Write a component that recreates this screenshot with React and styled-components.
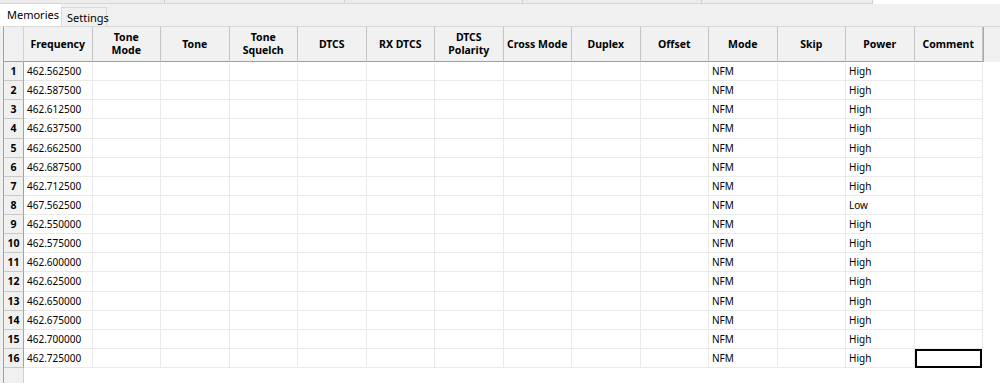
import React from "react";
import styled, { createGlobalStyle } from "styled-components";

const GlobalStyle = createGlobalStyle`
  html, body {
    margin: 0;
    padding: 0;
    height: 100%;
    background: #f0f0f0;
  }
  #root {
    height: 100%;
  }
  * {
    box-sizing: border-box;
  }
`;

const freqs = [
    "462.562500", "462.587500", "462.612500", "462.637500",
    "462.662500", "462.687500", "462.712500", "467.562500",
    "462.550000", "462.575000", "462.600000", "462.625000",
    "462.650000", "462.675000", "462.700000", "462.725000",
];

const columns = [
    ["Frequency"], ["Tone", "Mode"], ["Tone"], ["Tone", "Squelch"], ["DTCS"],
    ["RX DTCS"], ["DTCS", "Polarity"], ["Cross Mode"], ["Duplex"], ["Offset"],
    ["Mode"], ["Skip"], ["Power"], ["Comment"],
];

const toolbarParts = [165, 180, 178, 179, 171];

export default () => {
    return (
        <Page>
            <GlobalStyle />
            <TopStrip>
                {toolbarParts.map((w, i) => (
                    <ToolPart key={i} style={{ width: w }} />
                ))}
                <TopBlank />
            </TopStrip>
            <TabBar>
                <Tab active>Memories</Tab>
                <Tab>Settings</Tab>
            </TabBar>
            <Table>
                <HeaderRow>
                    <Corner />
                    {columns.map((lines, i) => (
                        <HeaderCell key={i}>
                            {lines.map((l, j) => <span key={j}>{l}</span>)}
                        </HeaderCell>
                    ))}
                    <HeaderFill />
                </HeaderRow>
                <Body>
                    {freqs.map((f, r) => (
                        <React.Fragment key={r}>
                            <RowNum>{r + 1}</RowNum>
                            {columns.map((c, i) => {
                                let text = "";
                                if (i === 0) text = f;
                                if (i === 10) text = "NFM";
                                if (i === 12) text = r === 7 ? "Low" : "High";
                                const focused = r === 15 && i === 13;
                                return <Cell key={i} focused={focused}>{text}</Cell>;
                            })}
                            <BlankCell />
                        </React.Fragment>
                    ))}
                    <GutterFill />
                    <BodyFill />
                </Body>
            </Table>
        </Page>
    );
}

const Page = styled.div`
    display: flex;
    flex-direction: column;
    height: 100%;
    font-family: "Noto Sans", "Open Sans", sans-serif;
    color: #000;
    overflow: hidden;
`;

const TopStrip = styled.div`
    display: flex;
    height: 4px;
    flex-shrink: 0;
`;

const ToolPart = styled.div`
    height: 4px;
    background: #ececec;
    border-right: 1px solid #cfcfcf;
    border-bottom: 1px solid #d6d6d6;
`;

const TopBlank = styled.div`
    flex: 1;
    background: #ffffff;
`;

const TabBar = styled.div`
    display: flex;
    align-items: flex-end;
    height: 22px;
    flex-shrink: 0;
`;

const Tab = styled.div`
    height: ${p => (p.active ? "22px" : "19px")};
    padding: ${p => (p.active ? "0 6px 1px 7px" : "0 5px")};
    display: flex;
    align-items: center;
    font-size: 11px;
    background: ${p => (p.active ? "#ffffff" : "#f0f0f0")};
    border: ${p => (p.active ? "none" : "1px solid #d9d9d9")};
    border-bottom: none;
    width: ${p => (p.active ? "61px" : "46px")};
`;

const Table = styled.div`
    flex: 1;
    display: flex;
    flex-direction: column;
    margin-left: 3px;
    border-left: 1px solid #a0a0a0;
    border-top: 1px solid #d9d9d9;
    background: #ffffff;
    min-height: 0;
`;

const HeaderRow = styled.div`
    display: grid;
    grid-template-columns: 20px repeat(14, 68.5px) 1fr;
    height: 35px;
    flex-shrink: 0;
    background: #f0f0f0;
`;

const Corner = styled.div`
    border-right: 1px solid #d0d0d0;
    border-bottom: 1px solid #a0a0a0;
`;

const HeaderCell = styled.div`
    display: flex;
    flex-direction: column;
    align-items: center;
    justify-content: center;
    font-size: 10.5px;
    font-weight: 700;
    line-height: 13px;
    border-right: 1px solid #c4c4c4;
    border-bottom: 1px solid #a0a0a0;
    background: #f1f1f1;
    color: #000;
    white-space: nowrap;
`;

const HeaderFill = styled.div`
    background: #f0f0f0;
    border-left: 1px solid #a8a8a8;
`;

const Body = styled.div`
    flex: 1;
    display: grid;
    grid-template-columns: 20px repeat(14, 68.5px) 1fr;
    grid-template-rows: repeat(16, 19.125px) 1fr;
`;

const RowNum = styled.div`
    display: flex;
    align-items: center;
    justify-content: center;
    font-size: 10.5px;
    font-weight: 700;
    background: #f0f0f0;
    border-right: 1px solid #a0a0a0;
    border-bottom: 1px solid #c8c8c8;
`;

const Cell = styled.div`
    display: flex;
    align-items: center;
    padding-left: 3px;
    font-size: 10px;
    background: #ffffff;
    border-right: 1px solid #eaeaea;
    border-bottom: 1px solid #eaeaea;
    white-space: nowrap;
    ${p => p.focused && `
        border: 2px solid #000;
        margin: 0 1px 0 0;
    `}
`;

const BlankCell = styled.div`
    background: #ffffff;
`;

const GutterFill = styled.div`
    background: #f0f0f0;
    border-right: 1px solid #d0d0d0;
`;

const BodyFill = styled.div`
    grid-column: 2 / -1;
    background: #ffffff;
`;
